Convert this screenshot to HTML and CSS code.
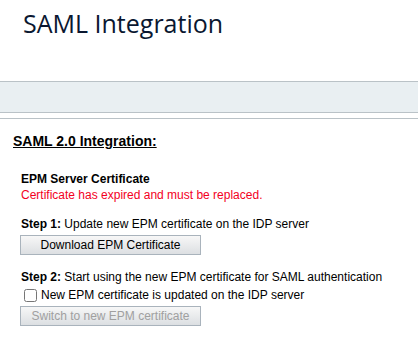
FILE: index.html
```html
<!DOCTYPE html>
<html lang="en">
<head>
    <meta charset="UTF-8">
    <title>SAML Integration</title>
    <link rel="stylesheet" href="styles.css">
</head>
<body>
    <div class="page-header">
        <h1>SAML Integration</h1>
    </div>
    <div class="toolbar"></div>
    <div class="rule"></div>

    <div class="section">
        <h2>SAML 2.0 Integration:</h2>

        <div class="block">
            <div class="label">EPM Server Certificate</div>
            <div class="error">Certificate has expired and must be replaced.</div>

            <div class="step"><b>Step 1:</b> Update new EPM certificate on the IDP server</div>
            <button class="btn">Download EPM Certificate</button>

            <div class="step step2"><b>Step 2:</b> Start using the new EPM certificate for SAML authentication</div>
            <label class="check">
                <input type="checkbox">New EPM certificate is updated on the IDP server
            </label>
            <button class="btn" disabled>Switch to new EPM certificate</button>
        </div>
    </div>
</body>
</html>
```

FILE: styles.css
```css
body {
    margin: 0;
    font-family: "Liberation Sans", Arial, sans-serif;
    font-size: 12px;
    color: #000;
    background: #fff;
}

/* title area */
.page-header {
    height: 81px;
    box-sizing: border-box;
    padding: 6px 0 0 23px;
}
.page-header h1 {
    margin: 0;
    font-family: "Open Sans", sans-serif;
    font-weight: 400;
    font-size: 25px;
    line-height: 34px;
    color: #0a1730;
}

.toolbar {
    height: 30px;
    background: #e9eff2;
    border-top: 1px solid #bac2c7;
    border-bottom: 1px solid #bac2c7;
}
.rule {
    margin-top: 5px;
    border-top: 1px solid #bac2c7;
}

/* main section */
.section {
    padding: 14px 0 0 13px;
}
.section h2 {
    margin: 0;
    font-size: 14px;
    line-height: 16px;
    font-weight: 700;
    text-decoration: underline;
}

.block {
    padding: 22px 0 0 8px;
    line-height: 16px;
}
.label {
    font-weight: 700;
}
.error {
    color: #f3001e;
}

.step {
    margin-top: 13px;
}
.step2 {
    margin-top: 14px;
}

.btn {
    display: block;
    margin: 3px 0 0 -1px;
    width: 181px;
    height: 20px;
    padding: 0;
    font-family: "Liberation Sans", Arial, sans-serif;
    font-size: 12px;
    color: #000;
    background: linear-gradient(#f7f7f7, #dcdfe2);
    border: 1px solid #a9b3bc;
    border-radius: 0;
}
.btn:disabled {
    color: #a0a0a0;
}

.check {
    display: flex;
    align-items: center;
    margin-top: 2px;
    height: 16px;
}
.check input {
    margin: 0 4px 0 3px;
    width: 13px;
    height: 13px;
}
```
